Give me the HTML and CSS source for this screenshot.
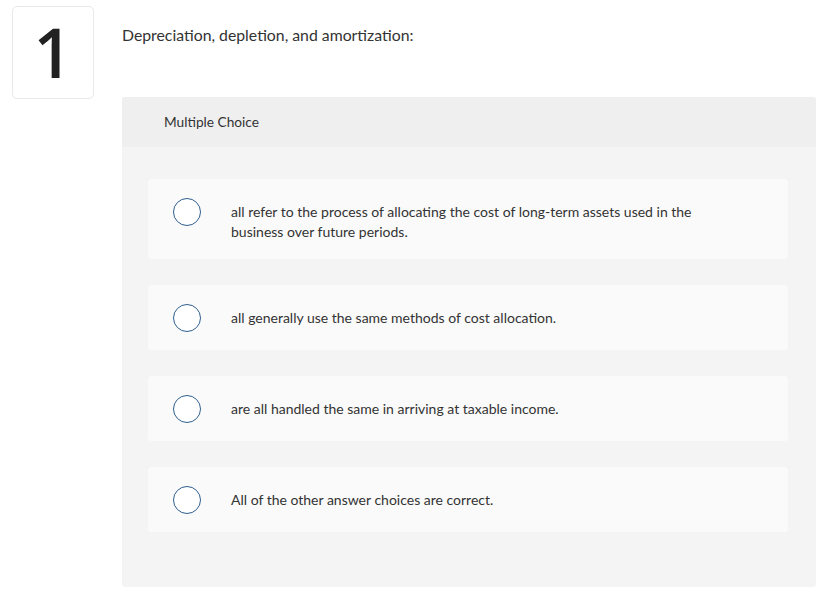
FILE: index.html
```html
<!DOCTYPE html>
<html>
<head>
<meta charset="utf-8">
<link rel="stylesheet" href="styles.css">
</head>
<body>
<div class="page">
  <div class="qnum">1</div>
  <div class="content">
    <p class="prompt">Depreciation, depletion, and amortization:</p>
    <div class="panel">
      <div class="panel-head">Multiple Choice</div>
      <div class="choices">
        <div class="choice"><span class="radio"></span><span class="label">all refer to the process of allocating the cost of long-term assets used in the business over future periods.</span></div>
        <div class="choice"><span class="radio"></span><span class="label">all generally use the same methods of cost allocation.</span></div>
        <div class="choice"><span class="radio"></span><span class="label">are all handled the same in arriving at taxable income.</span></div>
        <div class="choice"><span class="radio"></span><span class="label">All of the other answer choices are correct.</span></div>
      </div>
    </div>
  </div>
</div>
</body>
</html>
```

FILE: styles.css
```css
html, body {
  margin: 0;
  padding: 0;
  background: #ffffff;
  font-family: "Lato", "Liberation Sans", sans-serif;
  color: #333333;
}
.page {
  display: flex;
  align-items: flex-start;
  padding: 6px 16px 0 12px;
}
.qnum {
  box-sizing: border-box;
  width: 82px;
  height: 93px;
  border: 1px solid #e9e9e9;
  border-radius: 5px;
  display: flex;
  align-items: center;
  justify-content: center;
  font-family: "Open Sans", "Liberation Sans", sans-serif;
  font-size: 68px;
  line-height: 1;
  color: #222222;
  font-weight: 600;
  padding-bottom: 2px;
}
.content {
  flex: 1;
  margin-left: 28px;
}
.prompt {
  margin: 19px 0 0 0;
  font-size: 15.8px;
  line-height: 20px;
  color: #333;
}
.panel {
  margin-top: 52px;
  background: #f4f4f4;
  border-radius: 3px;
  padding-bottom: 55px;
}
.panel-head {
  height: 50px;
  box-sizing: border-box;
  background: #efefef;
  border-radius: 3px 3px 0 0;
  padding: 16px 0 0 42px;
  font-size: 13.7px;
  line-height: 18px;
  color: #333;
}
.choices {
  display: flex;
  flex-direction: column;
  gap: 26px;
  padding: 32px 28px 0 26px;
}
.choice {
  display: flex;
  align-items: flex-start;
  background: #fafafa;
  border-radius: 4px;
  padding: 19px 90px 18px 25px;
}
.radio {
  flex: none;
  box-sizing: border-box;
  width: 28px;
  height: 28px;
  border: 1.5px solid #2f5f8e;
  border-radius: 50%;
  background: #ffffff;
}
.label {
  margin: 4px 0 0 30px;
  font-size: 14px;
  line-height: 19.5px;
  color: #333;
}
```
